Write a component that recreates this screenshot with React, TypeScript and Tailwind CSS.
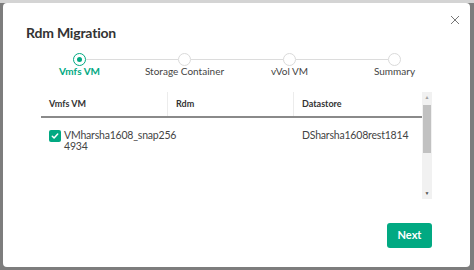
const GREEN = "bg-[#01a982]";

const STEPS = ["Vmfs VM", "Storage Container", "vVol VM", "Summary"];

function Stepper() {
  return (
    <div className="ml-[24px] mt-[11px] flex">
      {STEPS.map((label, i) => (
        <div key={label} className="flex w-[105px] flex-col items-center">
          <div className="flex w-full items-center">
            <div className={`h-px flex-1 ${i === 0 ? "" : "bg-[#dcdcdc]"}`} />
            {i === 0 ? (
              <span className="flex h-[13px] w-[13px] items-center justify-center rounded-full border-[1.5px] border-[#01a982] bg-white">
                <span className="h-[5px] w-[5px] rounded-full bg-[#01a982]" />
              </span>
            ) : (
              <span className="h-[13px] w-[13px] rounded-full border-[1.5px] border-[#dadada] bg-white" />
            )}
            <div className={`h-px flex-1 ${i === STEPS.length - 1 ? "" : "bg-[#dcdcdc]"}`} />
          </div>
          <span
            className={`mt-[-2px] whitespace-nowrap text-[10px] leading-[14px] ${
              i === 0 ? "font-bold text-[#01a982]" : "text-[#444]"
            }`}
          >
            {label}
          </span>
        </div>
      ))}
    </div>
  );
}

function Table() {
  return (
    <div className="ml-[38px] mt-[14px] flex h-[107px] w-[391px]">
      <div className="flex-1">
        {/* шапка */}
        <div className="flex h-[26px] items-center border-b-2 border-[#8a8a8a] text-[9px] font-bold text-[#333]">
          <div className="flex h-full w-[127px] items-center border-r border-[#ececec] pl-[8px]">Vmfs VM</div>
          <div className="flex h-full w-[126px] items-center border-r border-[#ececec] pl-[8px]">Rdm</div>
          <div className="flex h-full flex-1 items-center pl-[8px]">Datastore</div>
        </div>
        {/* ред */}
        <div className="flex pt-[12px] text-[10.5px] leading-[11px] tracking-[-0.2px] text-[#444]">
          <div className="flex w-[127px] items-start gap-[3px] pl-[8px]">
            <span className={`flex h-[12px] w-[12px] shrink-0 items-center justify-center rounded-[2px] ${GREEN}`}>
              <svg width="8" height="8" viewBox="0 0 8 8" fill="none">
                <path d="M1.3 4.2 3.1 6 6.7 2" stroke="white" strokeWidth="1.5" strokeLinecap="round" strokeLinejoin="round" />
              </svg>
            </span>
            <span className="flex flex-col whitespace-nowrap">
              <span>VMharsha1608_snap256</span>
              <span>4934</span>
            </span>
          </div>
          <div className="w-[126px]" />
          <div className="flex-1 pl-[8px]">DSharsha1608rest1814</div>
        </div>
      </div>
      {/* полоса за превъртане */}
      <div className="flex w-[10px] flex-col items-center bg-[#f1f1f1]">
        <span className="mt-[1px] text-[5px] leading-[8px] text-[#a3a3a3]">▲</span>
        <div className="mt-[4px] h-[48px] w-[8px] bg-[#c1c1c1]" />
        <div className="flex-1" />
        <span className="mb-[2px] text-[5px] leading-[8px] text-[#505050]">▼</span>
      </div>
    </div>
  );
}

export default function App() {
  return (
    <div
      className="h-[270px] w-[474px] border-t-[3px] border-[#d4d4d4] bg-[#7d7d7d] pb-[3px] pl-[3px] pr-[4px]"
      style={{ fontFamily: "Lato, 'Noto Sans', sans-serif" }}
    >
      <div className="flex h-full flex-col rounded-[4px] bg-white">
        <div className="flex items-start justify-between pl-[23px] pr-[10px] pt-[21px]">
          <h1 className="text-[14px] font-bold leading-[18px] tracking-[-0.2px] text-[#333]">Rdm Migration</h1>
          <svg width="10" height="10" viewBox="0 0 10 10" className="mt-[-9px]" fill="none">
            <path d="M1 1 9 9M9 1 1 9" stroke="#777" strokeWidth="1" />
          </svg>
        </div>
        <Stepper />
        <Table />
        <div className="flex justify-end pr-[38px] pt-[24px]">
          <button className={`h-[25px] w-[45px] rounded-[3px] ${GREEN} text-[11px] font-bold text-white`}>
            Next
          </button>
        </div>
      </div>
    </div>
  );
}
